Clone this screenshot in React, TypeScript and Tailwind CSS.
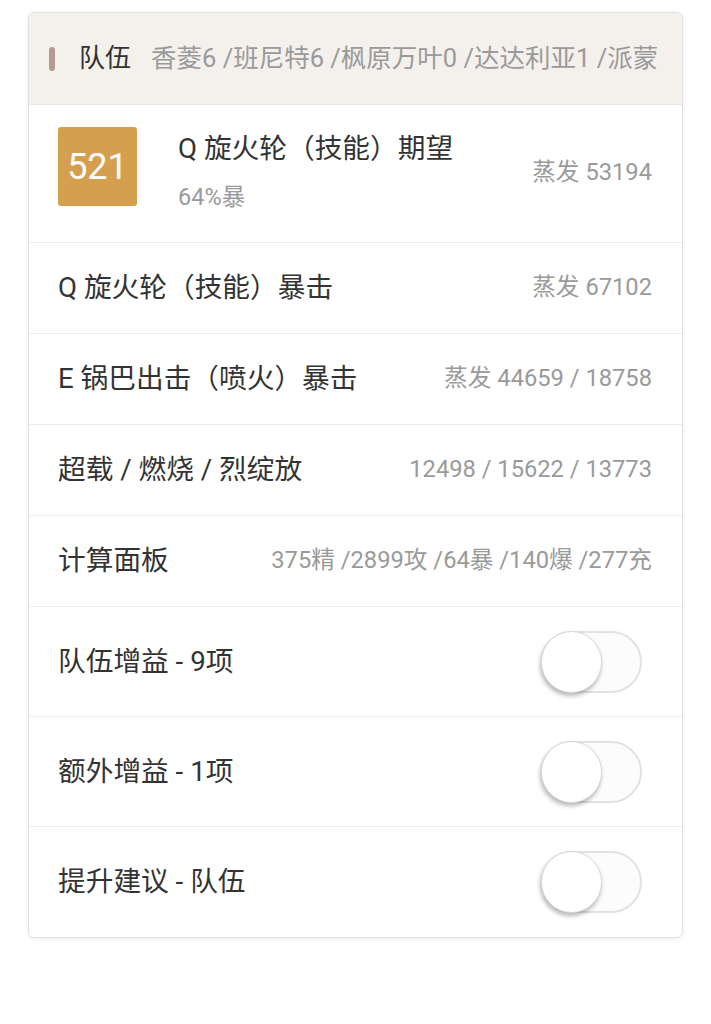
import React from 'react';

const team = '香菱6 /班尼特6 /枫原万叶0 /达达利亚1 /派蒙';

const rows = [
  { label: 'Q 旋火轮（技能）暴击', value: '蒸发 67102' },
  { label: 'E 锅巴出击（喷火）暴击', value: '蒸发 44659 / 18758' },
  { label: '超载 / 燃烧 / 烈绽放', value: '12498 / 15622 / 13773' },
  { label: '计算面板', value: '375精 /2899攻 /64暴 /140爆 /277充' },
];

const toggles = ['队伍增益 - 9项', '额外增益 - 1项', '提升建议 - 队伍'];

const Toggle: React.FC = () => (
  <div className="relative w-[101px] h-[62px] rounded-full border-2 border-[#e2e2e2] bg-[#fcfcfc]">
    <div className="absolute -left-[2px] -top-[2px] w-[61px] h-[62px] rounded-full bg-white border border-[#d8d8d8] shadow-[-1px_3px_4px_rgba(0,0,0,0.28)]" />
  </div>
);

const App: React.FC = () => {
  return (
    <div className="w-[711px] h-[1024px] bg-white pt-3 px-7 font-['Roboto','Noto_Sans_CJK_SC',sans-serif]">
      <div className="rounded-md border border-[#e2e2e2] shadow-[0_1px_4px_rgba(0,0,0,0.08)] overflow-hidden bg-white">
        {/* header */}
        <div className="h-[92px] bg-[#f4f1ed] flex items-center pl-5 pr-5 border-b border-[#ebe8e4] whitespace-nowrap overflow-hidden">
          <div className="w-[6px] h-[24px] rounded-full bg-[#b49a92] mr-6 shrink-0" />
          <span className="text-[26px] text-[#333] mr-5">队伍</span>
          <span className="text-[25.5px] text-[#9a9a9a]">{team}</span>
        </div>

        {/* expected damage */}
        <div className="h-[138px] flex items-start pt-[22px] pl-[29px] pr-[30px] border-b border-[#ececec]">
          <div className="w-[79px] h-[79px] rounded-[3px] bg-[#d4a04f] flex items-center justify-center text-white text-[36px]">
            521
          </div>
          <div className="ml-[41px] flex-1 flex flex-col">
            <span className="text-[27.7px] leading-[38px] text-[#333] mt-[3px]">Q 旋火轮（技能）期望</span>
            <span className="text-[23.5px] leading-[30px] text-[#9a9a9a] mt-[14px]">64%暴</span>
          </div>
          <span className="text-[23.7px] text-[#9a9a9a] mt-[28px]">蒸发 53194</span>
        </div>

        {rows.map((r) => (
          <div key={r.label} className="h-[91px] flex items-center justify-between pl-[29px] pr-[30px] border-b border-[#ececec] whitespace-nowrap">
            <span className="text-[27.7px] text-[#333]">{r.label}</span>
            <span className="text-[23.7px] text-[#9a9a9a]">{r.value}</span>
          </div>
        ))}

        {toggles.map((t, i) => (
          <div key={t} className={`h-[110px] flex items-center justify-between pl-[29px] pr-[40px] ${i < toggles.length - 1 ? 'border-b border-[#ececec]' : ''}`}>
            <span className="text-[27.7px] text-[#333]">{t}</span>
            <Toggle />
          </div>
        ))}
      </div>
    </div>
  );
};

export default App;
